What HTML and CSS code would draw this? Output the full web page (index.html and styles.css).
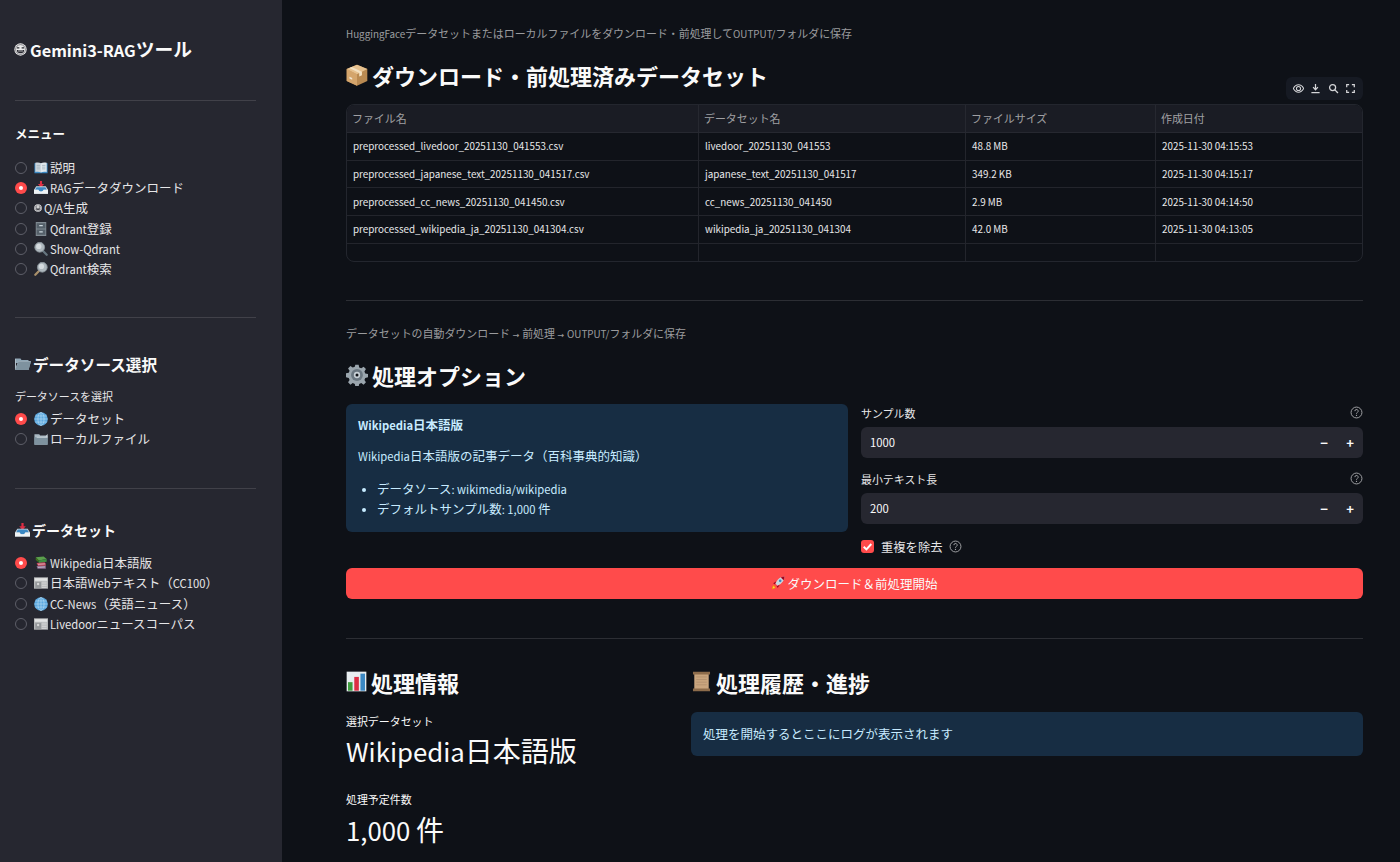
FILE: index.html
```html
<!DOCTYPE html>
<html lang="ja">
<head>
<meta charset="utf-8">
<title>Gemini3-RAGツール</title>
<link rel="stylesheet" href="styles.css">
</head>
<body>
<svg class="sprite" xmlns="http://www.w3.org/2000/svg">
  <symbol id="face" viewBox="0 0 16 16"><circle cx="8" cy="8" r="7.600" fill="#ececec"/><circle cx="8" cy="8" r="6" fill="none" stroke="#4a4a52" stroke-width=".8"/><path d="M3.600 6h3M9.400 6h3" stroke="#26272f" stroke-width="1.700"/><path d="M3.600 8.600h8.800a4.400 4 0 0 1-8.800 0z" fill="#26272f"/><path d="M5 9.800h6" stroke="#eee" stroke-width=".9"/></symbol>
  <symbol id="book" viewBox="0 0 16 16"><path d="M.5 2.500h15V14H.5z" fill="#3b88c3"/><path d="M1.500 2c2.500-.6 4.800-.5 6.500.5V13c-1.700-.9-4-1-6.500-.5z" fill="#ccd6dd"/><path d="M14.500 2c-2.500-.6-4.800-.5-6.500.5V13c1.700-.9 4-1 6.500-.5z" fill="#e1e8ed"/><path d="M3 5h3.800M3 7h3.800M3 9h3.800M9.200 5H13M9.200 7H13M9.200 9H13" stroke="#99aab5" stroke-width=".8"/></symbol>
  <symbol id="inbox" viewBox="0 0 16 16"><path d="M6.800 0h2.400v3.500H11.500L8 7.500 4.500 3.500h2.300z" fill="#dd2e44"/><path d="M2.500 6h11L16 10v4.500H0V10z" fill="#ccd6dd"/><path d="M3 7h10l1.800 3H11c-.5 1.300-1.500 2-3 2s-2.500-.7-3-2H1.200z" fill="#3b88c3"/><path d="M0 10h5c.5 1.500 1.500 2 3 2s2.500-.5 3-2h5v4.500H0z" fill="#eef2f4"/></symbol>
  <symbol id="cabinet" viewBox="0 0 16 16"><path d="M2 0h12v16H2z" fill="#808a92"/><path d="M3 1.500h10v6H3zM3 8.500h10v6H3z" fill="#55606a"/><path d="M6 3.500h4v1.400H6zM6 10.500h4v1.400H6z" fill="#ccd6dd"/></symbol>
  <symbol id="lensl" viewBox="0 0 16 16"><path d="M9.500 9.500l5 5" stroke="#66757f" stroke-width="2.600" stroke-linecap="round"/><circle cx="6.500" cy="6" r="5.600" fill="#aeb7bd" stroke="#868f96" stroke-width="1"/><circle cx="5.500" cy="5" r="3" fill="#d5dbdf"/></symbol>
  <symbol id="lensr" viewBox="0 0 16 16"><path d="M6.500 9.500l-5 5" stroke="#a9906a" stroke-width="2.600" stroke-linecap="round"/><circle cx="9.500" cy="6" r="5.600" fill="#aeb7bd" stroke="#868f96" stroke-width="1"/><circle cx="8.500" cy="5" r="3" fill="#d5dbdf"/></symbol>
  <symbol id="folderopen" viewBox="0 0 16 16"><path d="M0 2.500h5.500l1 1.500h7V7H0z" fill="#8fa6b5"/><path d="M0 14V3h1v8L3.500 5H16l-2.500 9z" fill="#aebcc6"/><path d="M0 14L3.500 5.500H16L13.500 14z" fill="#7e929f"/></symbol>
  <symbol id="folder" viewBox="0 0 16 16"><path d="M.5 2.500h5.500l1 1.500h8.500v10.500H.5z" fill="#a9b8c2"/><path d="M.5 6h15v8.500H.5z" fill="#7e929f"/><path d="M15.500 2L13 5.500H3v1.200h12.500z" fill="#c7d2d9"/></symbol>
  <symbol id="globe" viewBox="0 0 16 16"><circle cx="8" cy="8" r="7.800" fill="#5ba8e0"/><path d="M8 .5v15M.5 8h15M1.500 4.500h13M1.500 11.500h13" stroke="#b9dcf2" stroke-width=".7"/><ellipse cx="8" cy="8" rx="3.500" ry="7.500" fill="none" stroke="#b9dcf2" stroke-width=".7"/></symbol>
  <symbol id="books" viewBox="0 0 16 16"><path d="M2 1.500l9-1 3.500 3-9 1.500z" fill="#5ba04c"/><path d="M2 1.500l3.500 3.500v2.500L2 4.500z" fill="#3e721d"/><path d="M5.500 5l9-1.500v3L5.500 8z" fill="#3e8e41"/><path d="M3 8l9-.8 1.500 1.500v2.300l-9 .5z" fill="#c5495c"/><path d="M3 11.500l10.500-.5v3.500H4z" fill="#8c6d8f"/><path d="M4.500 9.500l8-.5M4.500 13l8-.5" stroke="#e1e8ed" stroke-width=".7"/></symbol>
  <symbol id="news" viewBox="0 0 16 16"><path d="M0 1.500h16v13H0z" fill="#b5b7b8"/><path d="M1 2.500h14v3H1z" fill="#e3e4e4"/><path d="M1.500 7h6.500v6.500H1.500z" fill="#94979a"/><path d="M9 7h5.500M9 9h5.500M9 11h5.500M9 13h5.500" stroke="#dcdddd" stroke-width=".9"/><circle cx="4.700" cy="9.200" r="1.400" fill="#d5d6d6"/></symbol>
  <symbol id="pkg" viewBox="0 0 16 16"><path d="M8 .5l7.500 3.200v8.600L8 15.800.5 12.300V3.700z" fill="#b98a52"/><path d="M8 7.400v8.400L.5 12.300V3.700z" fill="#d4a56c"/><path d="M.5 3.700L8 .5l7.500 3.200L8 7.400z" fill="#e6c18f"/><path d="M4.200 2.100l7.400 3.500v2.600l-2 .9V6.600L2.500 2.900z" fill="#f2e0c2"/><path d="M2.500 10.500l2 1v-1.400l-2-.9z" fill="#f0e6d4"/></symbol>
  <symbol id="gear" viewBox="0 0 16 16"><path d="M6.800.5h2.400l.4 2 1.500.6 1.700-1.100 1.700 1.700-1.100 1.700.6 1.500 2 .4v2.400l-2 .4-.6 1.500 1.100 1.700-1.700 1.700-1.700-1.100-1.500.6-.4 2H6.800l-.4-2-1.500-.6-1.700 1.100-1.700-1.700 1.100-1.700-.6-1.500-2-.4V6.800l2-.4.6-1.500L1.500 3.200l1.700-1.700 1.700 1.100 1.500-.6z" fill="#9aa5ad"/><circle cx="8" cy="8" r="4.300" fill="#6a7680"/><circle cx="8" cy="8" r="2.300" fill="#c8d0d6"/><circle cx="8" cy="8" r="1.100" fill="#0e1117"/></symbol>
  <symbol id="rocket" viewBox="0 0 16 16"><path d="M1 15c0-2.500.8-4 2-4.800l2.600 2.600C4.800 14.200 3.500 15 1 15z" fill="#f4900c"/><path d="M2 14c0-1.200.5-2 1.200-2.400l1.200 1.200C4 13.500 3.200 14 2 14z" fill="#ffcc4d"/><path d="M3 8l3-2-1 3.500L3 9zM8 13l2-3-3.500 1L7 13z" fill="#a0041e"/><path d="M15.500.5C11 .8 7.500 3.200 5 8.500L7.500 11c5.300-2.500 7.700-6 8-10.500z" fill="#ccd6dd"/><path d="M15.500.5c-1.500.1-3 .5-4.300 1.100l3.200 3.200c.6-1.300 1-2.800 1.100-4.300z" fill="#a0041e"/><circle cx="10.500" cy="5.500" r="1.500" fill="#3b88c3"/></symbol>
  <symbol id="chart" viewBox="0 0 16 16"><path d="M.5.500h15v15H.5z" fill="#e8edf0"/><path d="M1.500 8.500h3.500V15H1.500z" fill="#3e9d3e"/><path d="M6.300 4.500h3.500V15H6.300z" fill="#dd2e44"/><path d="M11 2h3.500v13H11z" fill="#3b88c3"/></symbol>
  <symbol id="scroll" viewBox="0 0 16 16"><path d="M2.500 1.500h11v13h-11z" fill="#c9a57e"/><path d="M1.500.5h13v2.200h-13zM1.500 13.300h13v2.200h-13z" fill="#8d6c4b"/><path d="M4 4.500h8M4 6.500h8M4 8.500h8M4 10.500h8" stroke="#b08f6c" stroke-width=".6"/></symbol>
  <symbol id="help" viewBox="0 0 16 16"><circle cx="8" cy="8" r="6.700" fill="none" stroke="currentColor" stroke-width="1.200"/><path d="M6 6.300a2 2 0 1 1 3 1.700c-.7.400-1 .8-1 1.500" fill="none" stroke="currentColor" stroke-width="1.200"/><circle cx="8" cy="11.600" r=".8" fill="currentColor"/></symbol>
</svg>

<div class="app">
  <aside class="sidebar">
    <h1 class="brand"><svg class="ico ico-brand"><use href="#face"/></svg><span><span class="la">Gemini3-RAG</span>ツール</span></h1>
    <hr class="rule rule-a">
    <div class="menu-title">メニュー</div>
    <ul class="radios radios-menu">
      <li class="radio"><span class="dot"></span><svg class="ico"><use href="#book"/></svg><span class="lbl">説明</span></li>
      <li class="radio on"><span class="dot"></span><svg class="ico"><use href="#inbox"/></svg><span class="lbl"><span class="la">RAG</span>データダウンロード</span></li>
      <li class="radio"><span class="dot"></span><svg class="ico ico-sm"><use href="#face"/></svg><span class="lbl"><span class="la">Q/A</span>生成</span></li>
      <li class="radio"><span class="dot"></span><svg class="ico"><use href="#cabinet"/></svg><span class="lbl"><span class="la">Qdrant</span>登録</span></li>
      <li class="radio"><span class="dot"></span><svg class="ico"><use href="#lensl"/></svg><span class="lbl"><span class="la">Show-Qdrant</span></span></li>
      <li class="radio"><span class="dot"></span><svg class="ico"><use href="#lensr"/></svg><span class="lbl"><span class="la">Qdrant</span>検索</span></li>
    </ul>
    <hr class="rule rule-b">
    <h3 class="side-h3"><svg class="ico ico-h3"><use href="#folderopen"/></svg>データソース選択</h3>
    <div class="side-label">データソースを選択</div>
    <ul class="radios">
      <li class="radio on"><span class="dot"></span><svg class="ico"><use href="#globe"/></svg><span class="lbl">データセット</span></li>
      <li class="radio"><span class="dot"></span><svg class="ico"><use href="#folder"/></svg><span class="lbl">ローカルファイル</span></li>
    </ul>
    <hr class="rule rule-c">
    <h4 class="side-h4"><svg class="ico ico-h4"><use href="#inbox"/></svg>データセット</h4>
    <ul class="radios">
      <li class="radio on"><span class="dot"></span><svg class="ico"><use href="#books"/></svg><span class="lbl"><span class="la">Wikipedia</span>日本語版</span></li>
      <li class="radio"><span class="dot"></span><svg class="ico"><use href="#news"/></svg><span class="lbl">日本語<span class="la">Web</span>テキスト（<span class="la">CC100</span>）</span></li>
      <li class="radio"><span class="dot"></span><svg class="ico"><use href="#globe"/></svg><span class="lbl"><span class="la">CC-News</span>（英語ニュース）</span></li>
      <li class="radio"><span class="dot"></span><svg class="ico"><use href="#news"/></svg><span class="lbl"><span class="la">Livedoor</span>ニュースコーパス</span></li>
    </ul>
  </aside>

  <main class="main">
    <p class="caption cap-1"><span class="la">HuggingFace</span>データセットまたはローカルファイルをダウンロード・前処理して<span class="la">OUTPUT/</span>フォルダに保存</p>
    <h2 class="title title-1"><svg class="ico ico-h2"><use href="#pkg"/></svg>ダウンロード・前処理済みデータセット</h2>
    <div class="table-wrap">
      <div class="toolbar">
        <svg viewBox="0 0 16 16"><path d="M.5 8c2-3.800 4.500-5.300 7.500-5.300s5.500 1.500 7.500 5.300c-2 3.800-4.500 5.300-7.500 5.300S2.500 11.800.5 8z" fill="none" stroke="currentColor" stroke-width="1.500"/><circle cx="8" cy="8" r="3" fill="none" stroke="currentColor" stroke-width="1.500"/></svg>
        <svg viewBox="0 0 16 16"><path d="M8 1.500v8M4.500 6L8 10l3.500-4" fill="none" stroke="currentColor" stroke-width="1.800"/><path d="M2 14h12" stroke="currentColor" stroke-width="1.800"/></svg>
        <svg viewBox="0 0 16 16"><circle cx="6.700" cy="6.700" r="4.400" fill="none" stroke="currentColor" stroke-width="1.800"/><path d="M10 10l4.500 4.500" stroke="currentColor" stroke-width="2"/></svg>
        <svg viewBox="0 0 16 16"><path d="M2.500 6V2.500H6M10 2.500h3.500V6M13.500 10v3.500H10M6 13.500H2.500V10" fill="none" stroke="currentColor" stroke-width="1.800"/></svg>
      </div>
      <table class="grid">
        <colgroup><col class="c1"><col class="c2"><col class="c3"><col class="c4"></colgroup>
        <thead><tr><th>ファイル名</th><th>データセット名</th><th>ファイルサイズ</th><th>作成日付</th></tr></thead>
        <tbody>
          <tr><td>preprocessed_livedoor_20251130_041553.csv</td><td>livedoor_20251130_041553</td><td>48.8 MB</td><td>2025-11-30 04:15:53</td></tr>
          <tr><td>preprocessed_japanese_text_20251130_041517.csv</td><td>japanese_text_20251130_041517</td><td>349.2 KB</td><td>2025-11-30 04:15:17</td></tr>
          <tr><td>preprocessed_cc_news_20251130_041450.csv</td><td>cc_news_20251130_041450</td><td>2.9 MB</td><td>2025-11-30 04:14:50</td></tr>
          <tr><td>preprocessed_wikipedia_ja_20251130_041304.csv</td><td>wikipedia_ja_20251130_041304</td><td>42.0 MB</td><td>2025-11-30 04:13:05</td></tr>
          <tr class="blank"><td></td><td></td><td></td><td></td></tr>
        </tbody>
      </table>
    </div>
    <hr class="rule rule-m1">
    <p class="caption cap-2">データセットの自動ダウンロード<span class="arw"> → </span>前処理<span class="arw"> → </span><span class="la">OUTPUT/</span>フォルダに保存</p>
    <h2 class="title title-2"><svg class="ico ico-h2"><use href="#gear"/></svg>処理オプション</h2>
    <div class="options">
      <div class="info">
        <p class="info-head"><span class="la">Wikipedia</span>日本語版</p>
        <p class="info-desc"><span class="la">Wikipedia</span>日本語版の記事データ（百科事典的知識）</p>
        <ul class="info-list">
          <li>データソース<span class="la">: wikimedia/wikipedia</span></li>
          <li>デフォルトサンプル数<span class="la">: 1,000 </span>件</li>
        </ul>
      </div>
      <div class="fields">
        <div class="field-label"><span>サンプル数</span><svg class="help"><use href="#help"/></svg></div>
        <div class="stepper"><span class="val">1000</span><span class="step">−</span><span class="step">+</span></div>
        <div class="field-label label-2"><span>最小テキスト長</span><svg class="help"><use href="#help"/></svg></div>
        <div class="stepper"><span class="val">200</span><span class="step">−</span><span class="step">+</span></div>
        <div class="check">
          <span class="box"><svg viewBox="0 0 12 12"><path d="M2.500 6.200l2.500 2.500 4.500-5" fill="none" stroke="#fff" stroke-width="1.800"/></svg></span>
          <span class="check-text">重複を除去</span>
          <svg class="help"><use href="#help"/></svg>
        </div>
      </div>
    </div>
    <button class="primary" type="button"><svg class="ico"><use href="#rocket"/></svg>ダウンロード＆前処理開始</button>
    <hr class="rule rule-m2">
    <div class="bottom">
      <section class="col-info">
        <h2 class="title"><svg class="ico ico-h2b"><use href="#chart"/></svg>処理情報</h2>
        <div class="metric-label ml-1">選択データセット</div>
        <div class="metric-value"><span class="la">Wikipedia</span>日本語版</div>
        <div class="metric-label ml-2">処理予定件数</div>
        <div class="metric-value"><span class="la">1,000 </span>件</div>
      </section>
      <section class="col-log">
        <h2 class="title"><svg class="ico ico-h2b"><use href="#scroll"/></svg>処理履歴・進捗</h2>
        <div class="alert">処理を開始するとここにログが表示されます</div>
      </section>
    </div>
  </main>
</div>
</body>
</html>
```

FILE: styles.css
```css
* { box-sizing: border-box; }
html, body { margin: 0; height: 100%; overflow: hidden; }
body {
  background: #0e1117;
  color: #fafafa;
  font-family: "Noto Sans CJK JP", "Noto Sans", sans-serif;
}
.sprite { display: none; }
.app { display: flex; height: 862px; overflow: hidden; }
p, h1, h2, h3, h4, ul { margin: 0; padding: 0; }
ul { list-style: none; }
.la { font-size: 0.9em; line-height: 0; }
.arw { font-family: "DejaVu Sans", sans-serif; font-size: 0.75em; line-height: 0; }
.ico { width: 14px; height: 14px; flex: none; margin-right: 2px; }

/* sidebar */
.sidebar { width: 282px; flex: none; background: #262730; padding: 37px 26px 0 15px; }
.brand { display: flex; align-items: center; height: 24px; font-size: 18.750px; line-height: 24px; font-weight: 700; }
.brand .la { font-size: 0.87em; }
.ico-brand { width: 13px; height: 13px; margin-right: 3px; margin-left: -1px; }
.rule { border: 0; height: 1px; margin: 0; background: rgba(250, 250, 250, 0.13); }
.rule-a { margin-top: 39px; }
.menu-title { margin-top: 24px; height: 18px; font-size: 12.500px; line-height: 18px; font-weight: 700; }
.radios { display: flex; flex-direction: column; gap: 2.200px; }
.radios-menu { margin-top: 16px; }
.radio { display: flex; align-items: center; height: 18px; font-size: 12.500px; line-height: 18px; color: #e6e6e8; }
.dot { width: 12px; height: 12px; border-radius: 50%; border: 1px solid #5d5e68; margin-right: 7px; flex: none; }
.on .dot { background: #ff4b4b; border: 0; position: relative; }
.on .dot::after { content: ""; position: absolute; left: 4px; top: 4px; width: 4px; height: 4px; border-radius: 50%; background: #fff; }
.ico-sm { width: 8px; height: 8px; margin-right: 2px; }
.rule-b { margin-top: 39px; }
.side-h3 { display: flex; align-items: center; margin-top: 35px; height: 22px; font-size: 15.600px; line-height: 22px; font-weight: 700; }
.ico-h3 { width: 16px; height: 16px; margin-right: 2px; }
.side-label { margin-top: 13px; font-size: 10.940px; line-height: 16px; color: #e6e6e8; }
.side-label + .radios { margin-top: 6px; }
.rule-c { margin-top: 40px; }
.side-h4 { display: flex; align-items: center; margin-top: 31px; height: 20px; font-size: 14px; line-height: 20px; font-weight: 700; }
.ico-h4 { width: 15px; height: 15px; margin-right: 2px; }
.side-h4 + .radios { margin-top: 14px; }

/* main */
.main { flex: 1; min-width: 0; padding: 25px 37px 0 64px; }
.caption { font-size: 10.940px; line-height: 16px; color: rgba(250, 250, 250, 0.6); }
.title { display: flex; align-items: center; height: 32px; font-size: 22px; line-height: 32px; font-weight: 700; }
.ico-h2 { width: 22px; height: 22px; margin-right: 4px; }
.ico-h2b { width: 21px; height: 21px; margin-right: 4px; }
.title-1 { margin-top: 18px; }
.table-wrap { position: relative; margin-top: 13px; }
.toolbar {
  position: absolute; right: 0; top: -27px; width: 77px; height: 23px;
  display: flex; align-items: center; justify-content: space-between; padding: 0 7px;
  background: #161a23; border-radius: 6px; color: #d5d6d9;
}
.toolbar svg { width: 11px; height: 11px; }
.grid {
  width: 1017px; table-layout: fixed; border-collapse: separate; border-spacing: 0;
  border: 1px solid #23262e; border-radius: 8px; font-size: 9.850px; overflow: hidden;
}
.c1 { width: 352px; } .c2 { width: 267px; } .c3 { width: 190px; }
.grid th {
  height: 28px; padding: 0 0 2px 5px; text-align: left; font-weight: 400; font-size: 10.940px;
  color: rgba(250, 250, 250, 0.6); background: #1a1c24;
  border-right: 1px solid #262830; border-bottom: 1px solid #262830;
}
.grid td {
  height: 27.700px; padding: 0 0 0 6px; color: #e8e8e9;
  border-right: 1px solid #23252c; border-bottom: 1px solid #23252c; white-space: nowrap;
}
.grid tr > :last-child { border-right: 0; }
.grid .blank td { height: 17px; border-bottom: 0; }
.rule-m1 { margin-top: 38px; }
.cap-2 { margin-top: 24px; }
.title-2 { margin-top: 18px; }
.options { display: flex; gap: 13px; margin-top: 13px; }
.info {
  width: 502px; height: 128px; flex: none; padding: 11px 12px 0 12px;
  background: #172d43; border-radius: 6px; color: #c7ebff; font-size: 12.500px; line-height: 20px;
}
.info-head { font-weight: 700; }
.info-desc { margin-top: 11px; }
.info-list { margin-top: 13px; }
.info-list li { position: relative; padding-left: 19px; line-height: 20.500px; }
.info-list li::before { content: ""; position: absolute; left: 4px; top: 9px; width: 4px; height: 4px; border-radius: 50%; background: #c7ebff; }
.fields { flex: 1; min-width: 0; }
.field-label { display: flex; align-items: center; justify-content: space-between; height: 18px; font-size: 10.940px; color: #e6e6e8; }
.label-2 { margin-top: 12px; }
.help { width: 13px; height: 13px; color: #a0a1a5; flex: none; }
.stepper { display: flex; align-items: center; height: 31px; margin-top: 5px; padding: 0 9px; background: #262730; border-radius: 6px; font-size: 11.300px; }
.val { flex: 1; }
.step { width: 26px; text-align: center; font-weight: 700; font-size: 13px; }
.step:last-child { width: 17px; text-align: right; }
.check { display: flex; align-items: center; margin-top: 14px; height: 18px; font-size: 12.300px; color: #e6e6e8; }
.box { width: 13px; height: 13px; border-radius: 3px; background: #ff4b4b; margin-right: 7px; display: flex; }
.check-text { margin-right: 6px; }
.primary {
  display: flex; align-items: center; justify-content: center; width: 100%; height: 31px; margin-top: 12px;
  background: #ff4b4b; color: #fafafa; border: 0; border-radius: 6px; font: inherit; font-size: 12.500px;
}
.rule-m2 { margin-top: 39px; }
.bottom { display: flex; gap: 0; margin-top: 27px; }
.col-info { width: 345px; flex: none; }
.col-log { flex: 1; min-width: 0; }
.metric-label { font-size: 10.940px; line-height: 14px; color: #fafafa; }
.ml-1 { margin-top: 16px; }
.ml-2 { margin-top: 22px; }
.metric-value { font-size: 28px; line-height: 40px; margin-top: 2px; }
.ml-2 + .metric-value { margin-top: 3px; }
.metric-value .la { font-size: 0.92em; }
.alert { margin-top: 14px; height: 44px; padding: 0 12px; display: flex; align-items: center; background: #172d43; border-radius: 6px; color: #c7ebff; font-size: 12.500px; }
```
